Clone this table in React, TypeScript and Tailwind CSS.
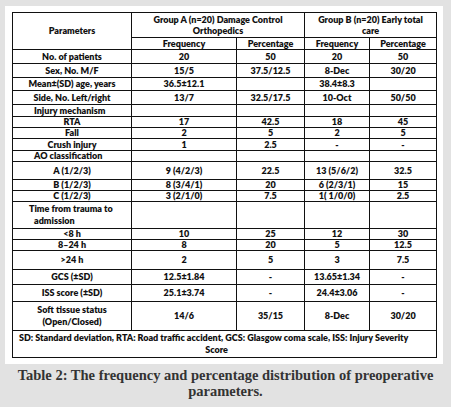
const rows: { label: string; cells: string[]; h: string; left?: boolean }[] = [
  { label: "No. of patients", cells: ["20", "50", "20", "50"], h: "h-[14px]" },
  { label: "Sex, No. M/F", cells: ["15/5", "37.5/12.5", "8-Dec", "30/20"], h: "h-[14px]" },
  { label: "Mean±(SD) age, years", cells: ["36.5±12.1", "", "38.4±8.3", ""], h: "h-[13px]" },
  { label: "Side, No. Left/right", cells: ["13/7", "32.5/17.5", "10-Oct", "50/50"], h: "h-[14px]" },
  { label: "Injury mechanism", cells: ["", "", "", ""], h: "h-[12px]", left: true },
  { label: "RTA", cells: ["17", "42.5", "18", "45"], h: "h-[11px]" },
  { label: "Fall", cells: ["2", "5", "2", "5"], h: "h-[10px]" },
  { label: "Crush injury", cells: ["1", "2.5", "-", "-"], h: "h-[12px]" },
  { label: "AO classification", cells: ["", "", "", ""], h: "h-[11px]", left: true },
  { label: "A (1/2/3)", cells: ["9 (4/2/3)", "22.5", "13 (5/6/2)", "32.5"], h: "h-[18px]" },
  { label: "B (1/2/3)", cells: ["8 (3/4/1)", "20", "6 (2/3/1)", "15"], h: "h-[10px]" },
  { label: "C (1/2/3)", cells: ["3 (2/1/0)", "7.5", "1( 1/0/0)", "2.5"], h: "h-[11px]" },
];

const rows2: { label: string; cells: string[]; h: string }[] = [
  { label: "<8 h", cells: ["10", "25", "12", "30"], h: "h-[11px]" },
  { label: "8–24 h", cells: ["8", "20", "5", "12.5"], h: "h-[11px]" },
  { label: ">24 h", cells: ["2", "5", "3", "7.5"], h: "h-[19px]" },
  { label: "GCS (±SD)", cells: ["12.5±1.84", "-", "13.65±1.34", "-"], h: "h-[15px]" },
  { label: "ISS score (±SD)", cells: ["25.1±3.74", "-", "24.4±3.06", "-"], h: "h-[17px]" },
];

const td = "border border-[#111] p-0 text-center align-middle leading-[10px]";

const Row = ({ label, cells, h, left }: { label: string; cells: string[]; h: string; left?: boolean }) => (
  <tr className={h}>
    <td className={`${td} ${left ? "!text-left pl-[21px]" : ""}`}>{label}</td>
    {cells.map((c, i) => (
      <td key={i} className={td}>
        {c}
      </td>
    ))}
  </tr>
);

export default function App() {
  return (
    <div className="w-[451px] h-[407px] bg-[#e2e2e2] pt-[6px] pl-[5px] overflow-hidden">
      <div className="w-[438px] bg-white pt-[6px] pb-[6px] pl-[7px]">
        <table
          className="table-fixed border-collapse w-[424px] text-[9px] font-extrabold text-[#111]"
          style={{ fontFamily: "Lato, 'Open Sans', sans-serif" }}
        >
          <colgroup>
            <col className="w-[119px]" />
            <col className="w-[105px]" />
            <col className="w-[68px]" />
            <col className="w-[65px]" />
            <col className="w-[67px]" />
          </colgroup>
          <tbody>
            <tr className="h-[25px]">
              <td rowSpan={2} className={td}>
                Parameters
              </td>
              <td colSpan={2} className={`${td} leading-[11px]`}>
                Group A (n=20) Damage Control
                <br />
                Orthopedics
              </td>
              <td colSpan={2} className={`${td} leading-[11px]`}>
                Group B (n=20) Early total
                <br />
                care
              </td>
            </tr>
            <tr className="h-[12px]">
              <td className={td}>Frequency</td>
              <td className={td}>Percentage</td>
              <td className={td}>Frequency</td>
              <td className={td}>Percentage</td>
            </tr>
            {rows.map((r) => (
              <Row key={r.label} {...r} />
            ))}
            <tr className="h-[27px]">
              <td className={`${td} !text-left pl-[16px] leading-[12px]`}>
                Time from trauma to
                <br />
                <span className="pl-[5px]">admission</span>
              </td>
              <td className={td}></td>
              <td className={td}></td>
              <td className={td}></td>
              <td className={td}></td>
            </tr>
            {rows2.map((r) => (
              <Row key={r.label} {...r} />
            ))}
            <tr className="h-[29px]">
              <td className={`${td} leading-[12px]`}>
                Soft tissue status
                <br />
                (Open/Closed)
              </td>
              <td className={td}>14/6</td>
              <td className={td}>35/15</td>
              <td className={td}>8-Dec</td>
              <td className={td}>30/20</td>
            </tr>
            <tr className="h-[27px]">
              <td colSpan={5} className={`${td} leading-[12px]`}>
                <div className="text-left pl-[6px]">
                  SD: Standard deviation, RTA: Road traffic accident, GCS: Glasgow coma scale, ISS: Injury Severity
                </div>
                <div className="pr-[16px]">Score</div>
              </td>
            </tr>
          </tbody>
        </table>
      </div>
      <div
        className="mt-[3px] pr-[5px] text-center text-[14.5px] leading-[16px] font-bold text-[#333]"
        style={{ fontFamily: "'Liberation Serif', serif" }}
      >
        Table 2: The frequency and percentage distribution of preoperative
        <br />
        parameters.
      </div>
    </div>
  );
}
